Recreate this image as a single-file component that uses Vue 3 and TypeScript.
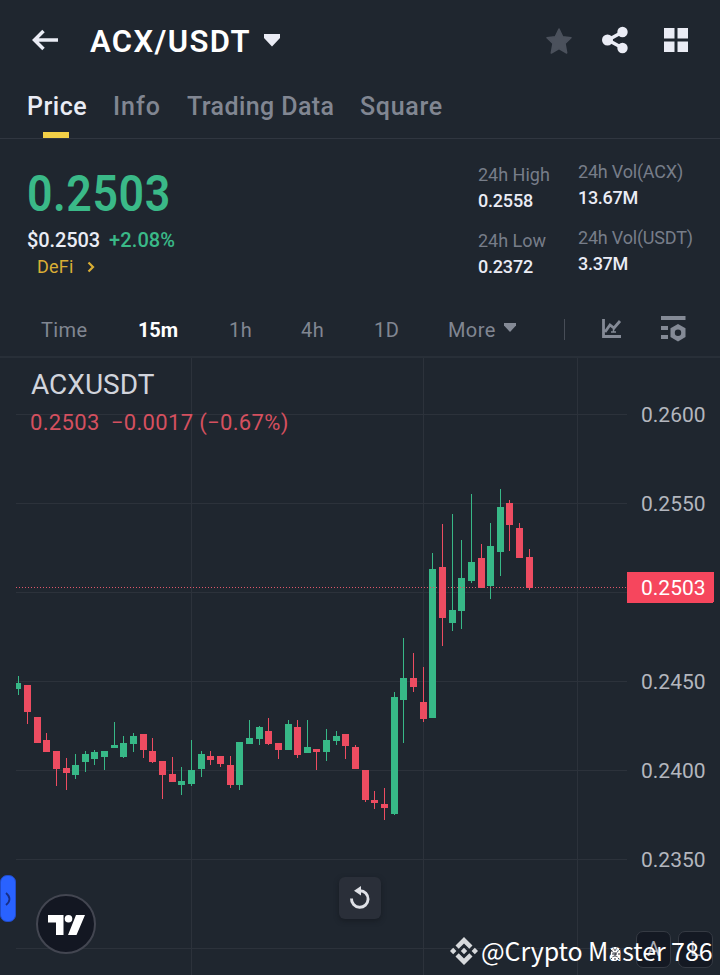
<script setup lang="ts">
interface Candle { x: number; high: number; top: number; bottom: number; low: number; up: boolean }

const tabs = ['Price', 'Info', 'Trading Data', 'Square']
const intervals = ['Time', '15m', '1h', '4h', '1D', 'More']
const stats = [
  { label: '24h High', value: '0.2558' },
  { label: '24h Vol(ACX)', value: '13.67M' },
  { label: '24h Low', value: '0.2372' },
  { label: '24h Vol(USDT)', value: '3.37M' },
]
const levels = ['0.2600', '0.2550', '', '0.2450', '0.2400', '0.2350', '']
const gridX = [191, 423, 577]

// x, high, body top, body bottom, low, direction (1 = up)
const rows: number[][] = [
  [18, 676, 683, 689, 695, 1], [27, 685, 685, 712, 724, 0], [37, 717, 717, 743, 743, 0],
  [46, 733, 740, 752, 752, 0], [56, 751, 751, 769, 786, 0], [66, 758, 768, 773, 790, 0],
  [75, 754, 765, 775, 779, 1], [85, 751, 754, 762, 772, 1], [94, 750, 752, 759, 765, 1],
  [104, 751, 751, 757, 770, 1], [114, 722, 745, 748, 748, 1], [123, 736, 743, 757, 758, 1],
  [133, 733, 736, 744, 752, 1], [143, 734, 734, 750, 758, 0], [152, 738, 751, 762, 763, 0],
  [162, 761, 761, 775, 799, 0], [172, 757, 774, 782, 782, 0], [181, 767, 781, 785, 795, 1],
  [191, 740, 770, 784, 786, 1], [201, 751, 754, 769, 777, 1], [210, 751, 756, 760, 765, 0],
  [220, 756, 756, 764, 767, 0], [230, 756, 765, 785, 788, 0], [239, 742, 742, 785, 790, 1],
  [249, 720, 738, 744, 744, 1], [259, 726, 727, 739, 745, 1], [268, 718, 731, 744, 745, 0],
  [278, 743, 743, 750, 759, 0], [288, 720, 724, 750, 750, 1], [297, 720, 727, 755, 758, 0],
  [307, 720, 747, 753, 753, 1], [316, 749, 749, 752, 770, 0], [326, 729, 740, 752, 761, 1],
  [336, 731, 736, 741, 745, 1], [345, 734, 734, 746, 759, 0], [355, 745, 747, 769, 769, 0],
  [365, 770, 770, 800, 802, 0], [374, 791, 800, 803, 809, 0], [384, 788, 804, 808, 820, 0],
  [394, 692, 697, 814, 815, 1], [403, 638, 678, 700, 743, 1], [413, 653, 678, 687, 692, 0],
  [423, 667, 702, 719, 722, 0], [432, 553, 569, 718, 718, 1], [442, 524, 567, 618, 646, 0],
  [452, 514, 610, 623, 631, 1], [461, 540, 578, 611, 629, 1], [471, 494, 562, 581, 583, 1],
  [481, 544, 558, 588, 588, 0], [490, 523, 546, 586, 599, 1], [500, 489, 507, 552, 576, 1],
  [509, 500, 503, 525, 551, 0], [519, 523, 528, 558, 558, 0], [529, 549, 557, 588, 590, 0],
]
const candles: Candle[] = rows.map(([x, high, top, bottom, low, up]) => ({ x, high, top, bottom, low, up: up === 1 }))
</script>

<template>
  <main class="screen">
    <header class="topbar">
      <svg class="back" width="28" height="22" viewBox="0 0 28 22"><path d="M27 11H4M12.500 2L3.500 11L12.500 20" fill="none" stroke="#eaecf5" stroke-width="3.500" /></svg>
      <h1>ACX/USDT</h1>
      <svg class="caret" width="16" height="13" viewBox="0 0 16 13"><path d="M0 0H16V4L8 12.500L0 4Z" fill="#eaecf5" /></svg>
      <svg class="star" width="28" height="28" viewBox="0 0 28 28"><path d="M14 2L17.700 9.700L26 10.700L20 16.500L21.700 26L14 21.500L6.300 26L8 16.500L2 10.700L10.300 9.700Z" fill="#4b515c" stroke="#4b515c" stroke-linejoin="round" stroke-width="1.500" /></svg>
      <svg class="share" width="26" height="28" viewBox="0 0 26 28"><path d="M20.500 6L6 14L20.500 22" fill="none" stroke="#eaecf5" stroke-width="3.500" /><g fill="#eaecf5"><circle cx="20.500" cy="6" r="5.200" /><circle cx="5.500" cy="14" r="5.500" /><circle cx="20.500" cy="22" r="5.200" /></g></svg>
      <svg class="tiles" width="24" height="24" viewBox="0 0 24 24"><path d="M0 0H10.500V10.500H0ZM13.500 0H24V10.500H13.500ZM0 13.500H10.500V24H0ZM13.500 13.500H24V24H13.500Z" fill="#eaecf5" /></svg>
    </header>

    <nav class="tabs">
      <span v-for="(tab, i) in tabs" :key="tab" class="tab" :class="[`tab-${i}`, { active: i === 0 }]">{{ tab }}</span>
    </nav>

    <section class="summary">
      <div class="quote">
        <div class="price">0.2503</div>
        <div class="sub"><span class="usd">$0.2503</span><span class="gain">+2.08%</span></div>
        <div class="tag"><span>DeFi</span><svg width="8" height="12" viewBox="0 0 8 12"><path d="M1.500 1.500L6 6L1.500 10.500" fill="none" stroke="#d9ae35" stroke-width="2.200" /></svg></div>
      </div>
      <dl class="stats">
        <div v-for="(s, i) in stats" :key="s.label" :class="{ raised: i % 2 === 1 }"><dt>{{ s.label }}</dt><dd>{{ s.value }}</dd></div>
      </dl>
    </section>

    <nav class="intervals">
      <span v-for="(t, i) in intervals" :key="t" :class="[`int-${i}`, { on: i === 1 }]">{{ t }}</span>
      <svg class="more" width="12" height="9" viewBox="0 0 12 9"><path d="M0 0H12V2.500L6 9L0 2.500Z" fill="#848a96" /></svg>
      <i class="divider"></i>
      <svg class="chart-icon" width="20" height="20" viewBox="0 0 20 20"><path d="M1.500 0V17.500H19M3 13L8 6L12 9L18 2" fill="none" stroke="#848a96" stroke-width="2.800" /><path d="M11.500 10V13.500M9 13H14" stroke="#848a96" stroke-width="1.500" /></svg>
      <svg class="settings" width="26" height="26" viewBox="0 0 26 26"><path d="M0 0H24.500V4H0ZM0 10H7V14H0ZM0 19H7V23H0Z" fill="#848a96" /><path fill-rule="evenodd" d="M17 8L24.500 12.300V21L17 25.500L9.500 21V12.300ZM17 13.500A3.200 3.200 0 1 0 17 19.900A3.200 3.200 0 1 0 17 13.500" fill="#848a96" /></svg>
    </nav>

    <section class="chart">
      <svg class="plot" width="720" height="619" viewBox="0 356 720 619" shape-rendering="crispEdges">
        <rect x="0" y="356" width="720" height="2" fill="#282f38" />
        <rect v-for="(l, i) in levels" :key="i" x="16" :y="414 + i * 89" width="611" height="1" fill="#2c323b" />
        <rect v-for="x in gridX" :key="x" :x="x" y="358" width="1" height="617" fill="#2c323b" />
        <g v-for="c in candles" :key="c.x" :fill="c.up ? '#37b887' : '#ed4c61'">
          <rect :x="c.x" :y="c.high" width="1" :height="c.low - c.high" />
          <rect :x="c.x === 18 ? 16 : c.x - 3" :y="c.top" :width="c.x === 18 ? 5 : 7" :height="c.bottom - c.top" />
        </g>
        <line x1="16" x2="627" y1="587.5" y2="587.5" stroke="#e0566a" stroke-dasharray="1 2" />
        <path d="M627 572H712Q714 572 714 574V601Q714 603 712 603H627Z" fill="#f6465d" />
      </svg>
      <div class="legend">
        <div class="symbol">ACXUSDT</div>
        <div class="change"><span>0.2503</span><span>−0.0017 (−0.67%)</span></div>
      </div>
      <div class="axis"><span v-for="(l, i) in levels" :key="i">{{ l }}</span></div>
      <span class="last">0.2503</span>

      <div class="drawer"><svg width="6" height="14" viewBox="0 0 6 14"><path d="M1 1Q4.500 4 4.500 7T1 13" fill="none" stroke="#172e86" stroke-width="1.800" /></svg></div>
      <div class="tv"><svg width="37" height="20" viewBox="0 0 37 20" fill="#fff"><path d="M0 0H15.500V20H8V7.500H0ZM28 0H37L28.500 20H20Z" /><circle cx="20.500" cy="3.800" r="3.800" /></svg></div>
      <div class="reset"><svg width="22" height="24" viewBox="0 0 22 24"><path d="M2.500 12.500A8.300 8.300 0 1 0 11 4.700" fill="none" stroke="#dfe1e7" stroke-width="2.900" /><path d="M5 4.700L12 0V9.400Z" fill="#dfe1e7" /></svg></div>
      <div class="scales"><b>A</b><b>L</b></div>
      <div class="watermark">
        <svg width="28" height="28" viewBox="0 0 28 28" fill="#d7d9dc"><path d="M14 0L22.500 8.500L19.300 11.700L14 6.400L8.700 11.700L5.500 8.500ZM14 28L22.500 19.500L19.300 16.300L14 21.600L8.700 16.300L5.500 19.500ZM3.200 10.800L6.400 14L3.200 17.200L0 14ZM24.800 10.800L28 14L24.800 17.200L21.600 14ZM14 10.800L17.200 14L14 17.200L10.800 14Z" /></svg>
        <span>@Crypto Master 786</span>
      </div>
      <svg class="bug" width="12" height="16" viewBox="0 0 12 16"><ellipse cx="6" cy="9" rx="4.500" ry="6" fill="#fff" /><path d="M1 3L11 14M11 3L1 14M0 8H12M6 3V15M3 0L5 3M9 0L7 3" stroke="#252b34" stroke-dasharray="2 1" /></svg>
    </section>
  </main>
</template>

<style>
body { margin: 0; background: #1f262f; }
</style>

<style scoped>
* { box-sizing: border-box; }
.screen { width: 720px; height: 975px; overflow: hidden; background: #1f262f; color: #eaecf5; font-family: Roboto, "Liberation Sans", sans-serif; white-space: nowrap; }
svg { display: block; flex: none; }
.topbar { display: flex; align-items: center; height: 80px; padding: 0 31px; }
.back { margin-top: -1px; }
h1 { margin: 3px 0 0 31px; width: 161px; font-size: 31px; line-height: 40px; font-weight: 600; letter-spacing: 1.4px; color: #fff; }
.caret { margin-left: 13px; }
.star { margin: 1px 0 0 265px; }
.share { margin: -1px 0 0 29px; }
.tiles { margin: -1px 0 0 36px; }
.tabs { display: flex; height: 59px; padding-left: 27px; border-bottom: 1px solid #303640; font-size: 25px; line-height: 54px; font-weight: 500; color: #818692; letter-spacing: .7px; }
.tab { position: relative; }
.tab-0 { width: 86px; letter-spacing: .5px; }
.tab-1 { width: 74px; letter-spacing: 1px; }
.tab-2 { width: 173px; letter-spacing: .4px; }
.active { color: #eaecf5; }
.active::after { content: ""; position: absolute; left: 16px; top: 52px; width: 26px; height: 6px; background: #f3d047; }
.summary { display: flex; height: 163px; padding-left: 27px; }
.quote { width: 451px; }
.price { margin-top: 27px; height: 60px; font-size: 50px; line-height: 56px; font-weight: 600; color: #3ab988; letter-spacing: .6px; transform: scaleX(.895); transform-origin: left; }
.sub { display: flex; gap: 9px; font-size: 20px; line-height: 28px; font-weight: 500; }
.usd { letter-spacing: -.1px; }
.gain { color: #3ab988; letter-spacing: .1px; }
.tag { display: flex; align-items: center; gap: 14px; margin-left: 10px; font-size: 18px; line-height: 26px; color: #d9ae35; letter-spacing: .2px; }
.stats { display: grid; grid-template-columns: 100px auto; grid-auto-rows: 66px; margin: 23px 0 0; font-size: 18px; line-height: 26px; }
.raised { margin-top: -3px; letter-spacing: -.2px; }
dt { color: #777d89; }
dd { margin: 0; font-weight: 500; letter-spacing: -.2px; }
.raised dd { letter-spacing: -.3px; }
.intervals { display: flex; align-items: center; height: 54px; padding-left: 41px; font-size: 20px; color: #818692; letter-spacing: .4px; }
.intervals span { padding-top: 1px; }
.on { color: #fff; font-weight: 700; letter-spacing: -.1px; }
.int-0 { width: 97px; }
.int-1 { width: 91px; }
.int-2 { width: 72px; }
.int-3 { width: 73px; }
.int-4 { width: 74px; }
.int-5 { width: 56px; }
.more { margin-bottom: 4px; }
.divider { width: 1px; height: 21px; margin-left: 48px; background: #474d57; }
.chart-icon { margin-left: 37px; }
.settings { margin-left: 39px; }
.chart { position: relative; height: 619px; }
.legend { position: absolute; left: 30px; top: 11px; }
.symbol { margin-left: 1px; font-size: 28px; line-height: 36px; color: #d1d4dc; }
.change { display: flex; gap: 11px; margin-top: 5px; font-size: 22px; line-height: 30px; color: #d4505f; letter-spacing: .35px; }
.axis { position: absolute; left: 641px; top: 14px; display: grid; grid-auto-rows: 89px; font-size: 21px; line-height: 90px; color: #b3b6be; }
.last { position: absolute; left: 641px; top: 217px; font-size: 21px; line-height: 31px; color: #fff; }
.drawer { position: absolute; left: 0; top: 519px; display: flex; align-items: center; justify-content: center; width: 16px; height: 47px; border: 1px solid #204cc8; border-radius: 7px; background: #2962ff; }
.tv { position: absolute; left: 36px; top: 538px; display: grid; place-items: center; width: 60px; height: 60px; padding-top: 1px; border: 2px solid #434651; border-radius: 50%; background: #131722; }
.reset { position: absolute; left: 339px; top: 521px; display: grid; place-items: center; width: 42px; height: 42px; border-radius: 6px; background: #2a2f39; box-shadow: 0 2px 5px #11151b88; }
.scales { position: absolute; left: 636px; top: 575px; display: flex; gap: 7px; }
.scales b { width: 35px; height: 37px; border: 1px solid #353a43; border-radius: 7px; background: #141923; color: #a9acb4; font-size: 20px; line-height: 35px; text-align: center; font-weight: 400; }
.watermark { position: absolute; left: 450px; top: 577px; display: flex; align-items: center; gap: 3px; height: 36px; font-family: "Noto Sans CJK SC", sans-serif; font-size: 25px; letter-spacing: -.1px; color: #fff; }
.watermark span { margin-top: -3px; }
.bug { position: absolute; left: 609px; top: 590px; }
</style>
